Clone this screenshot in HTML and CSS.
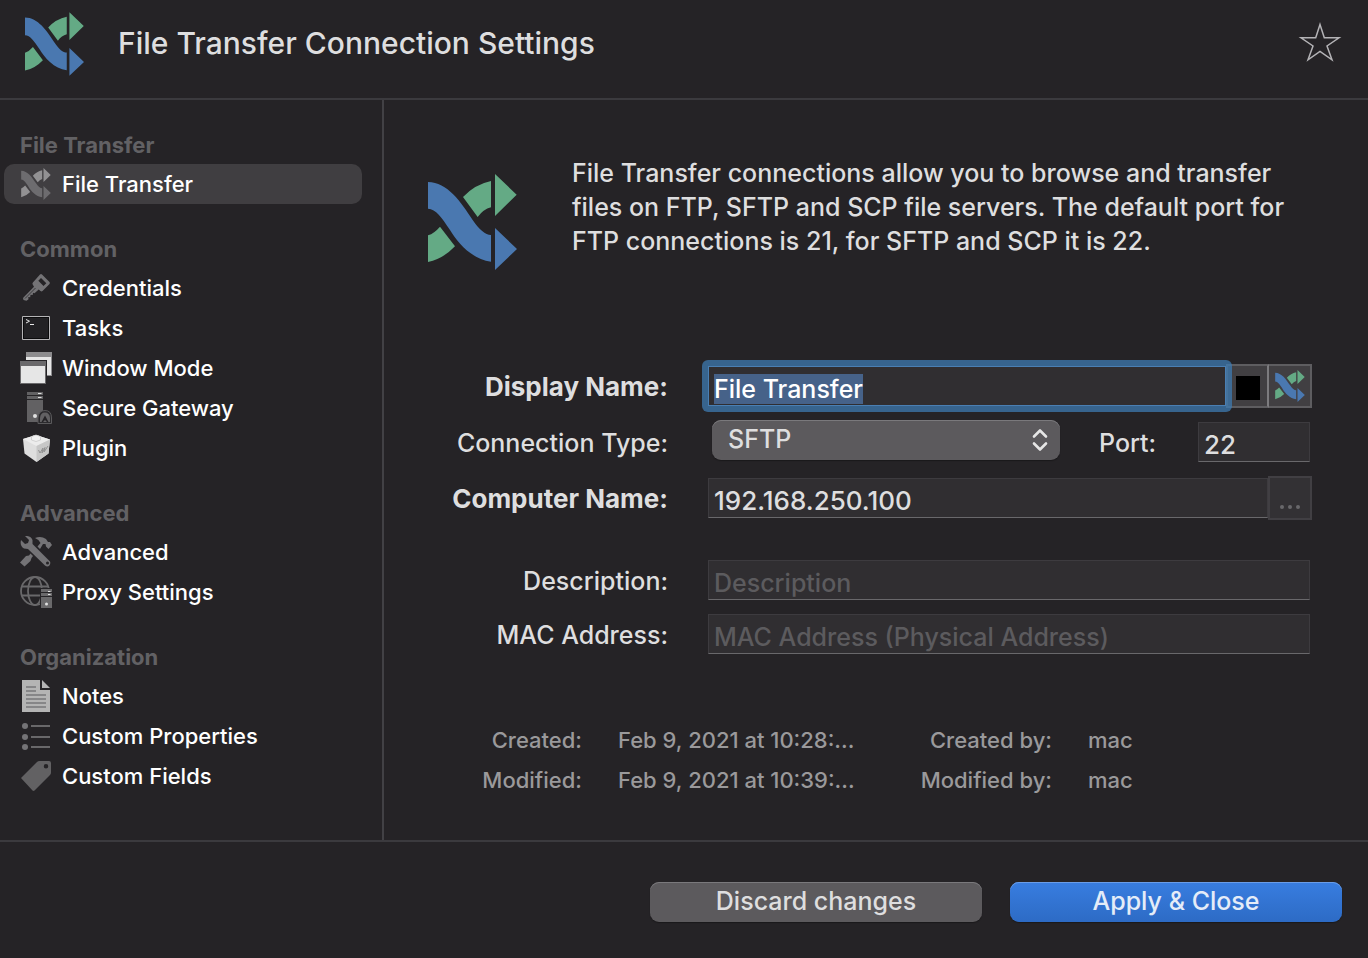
FILE: index.html
```html
<!DOCTYPE html>
<html lang="en">
<head>
<meta charset="utf-8">
<meta name="viewport" content="width=device-width, initial-scale=1">
<title>File Transfer Connection Settings</title>
<link rel="stylesheet" href="styles.css">
</head>
<body>
<svg class="defs" aria-hidden="true">
  <symbol id="logo" viewBox="84 72 267 288">
    <path class="logo-green" d="M189 141Q225 103 273 93V172Q250 178 233 201ZM84 256Q103 250 120 230L165 289Q130 326 84 336ZM285 72L350 134L285 198Z"/>
    <path class="logo-blue" d="M84 96C142 96 183 156 218 210C238 240 256 254 273 255V335C216 328 172 278 150 240C124 201 108 177 84 176ZM285 234L351 297L285 360Z"/>
  </symbol>
</svg>

<header class="header">
  <svg class="header-logo" role="img" aria-label="File Transfer"><use href="#logo"/></svg>
  <h1 class="title">File Transfer Connection Settings</h1>
  <button class="star" type="button" aria-label="Favorite">
    <svg viewBox="0 0 44 44" width="44" height="44"><path d="M22 2.500L26.300 15.800H41L29 24L34 37.800L22 29.500L10 37.800L15 24L3 15.800H17.700Z" fill="none" stroke="#b4b3b6" stroke-width="1.500"/></svg>
  </button>
</header>

<div class="body">
  <nav class="sidebar" aria-label="Settings sections">
    <section class="group">
      <h2 class="group-title">File Transfer</h2>
      <a class="item active" href="#file-transfer" aria-current="page">
        <svg class="icon mono-logo"><use href="#logo"/></svg>File Transfer</a>
    </section>
    <section class="group">
      <h2 class="group-title">Common</h2>
      <a class="item" href="#credentials">
        <svg class="icon" viewBox="0 0 32 32"><path fill="#747376" fill-rule="evenodd" d="M20 2.500Q21 1.700 22 2.500L29.500 10Q30.300 11 29.500 12L22.500 19Q21.500 19.800 20.500 19L18.700 17.500L14.500 21.300L13 20.800L12.700 23L10.500 22.800L10.200 25.200L8.300 25L8.500 27.200L6.500 28.700L3.500 28L3 26L14 14.800L12.700 12.500Q12 11.500 12.900 10.500ZM21 6L18.300 8.800L23.500 14L26.300 11.200Z"/><path d="M5 26.500L15.500 16" stroke="#39383b"/></svg>Credentials</a>
      <a class="item" href="#tasks">
        <svg class="icon" viewBox="0 0 32 32"><path fill="#222124" stroke="#b5b4b6" d="M2.500 4.500H29.500V27.500H2.500Z"/><path fill="none" stroke="#0b0b0c" d="M3.500 5.500H28.500V26.500H3.500Z"/><path fill="none" stroke="#e8e8e8" d="M6 7.500L9.500 9.200L6 11M10 12.500H14"/></svg>Tasks</a>
      <a class="item" href="#window-mode">
        <svg class="icon" viewBox="0 0 32 32"><path fill="#e6e6e6" d="M6 0H32V24H6Z"/><path fill="#8d8c8e" d="M6 0H32V5H6ZM31 5H32V24H26V23H31Z"/><path fill="#252326" d="M0 8H27V32H0Z"/><path fill="#6a696b" d="M0 9H26V32H0Z"/><path fill="#e6e6e6" d="M1 14H25V31H1Z"/></svg>Window Mode</a>
      <a class="item" href="#secure-gateway">
        <svg class="icon" viewBox="0 0 32 32"><path fill="#626163" d="M7 0H23V3H7ZM7 4H23V7H7ZM7 8H23V30H7Z"/><path stroke="#e0e0e0" d="M18 1.500H21.500M18 5.500H21.500"/><circle cx="15" cy="24" r="2" fill="#e0e0e0"/><path fill="#2b2a2d" stroke="#5a595b" d="M18 31.500V26Q18.500 18.500 25 18.500Q31.500 18.500 31.500 26V31.500Z"/><path fill="#626163" d="M20 30V26Q20.500 20.500 25 20.500Q29.500 20.500 30 26V30Z"/><path d="M25 23.500L28.500 30H27L25 28L23 30H21.500Z" fill="#252326"/></svg>Secure Gateway</a>
      <a class="item" href="#plugin">
        <svg class="icon" viewBox="0 0 32 32"><path fill="#dedede" d="M3 7L16 3L30 7.500L28.500 21.500L16.500 30L4.500 21.500Z"/><path fill="#ececec" d="M3 7L16 3L30 7.500L16.500 14Z"/><path fill="#c7c7c7" d="M30 7.500L28.500 21.500L16.500 30V14Z"/><path fill="#f2f2f2" stroke="#c4c4c4" stroke-width=".7" d="M11.500 4.500Q16 1.500 20.500 4.500V8Q16 11 11.500 8Z"/><path stroke="#929292" fill="none" d="M18.500 18L20 21L23 16L22 21L25 15.500L24 20L28 14"/></svg>Plugin</a>
    </section>
    <section class="group">
      <h2 class="group-title">Advanced</h2>
      <a class="item" href="#advanced">
        <svg class="icon" viewBox="0 0 32 32"><path fill="#747376" fill-rule="evenodd" d="M1 4L5 8L8 7L9 4L5 0Q11-.5 12.500 4L12.500 8L30 25.500Q31 28 29 30Q27 31 25 29.500L8 13L4 12.500Q-.5 10 1 4ZM27.500 25.500A1.500 1.500 0 1 0 27.500 28.500A1.500 1.500 0 1 0 27.500 25.500Z"/><path fill="#747376" d="M15 2Q21-.5 26 3L28 6L30 6L32 9L28.500 13L26 10.500L25.500 8L23 8L20 13L17.500 10.500L20.500 7Q19 3.500 15 2ZM10.500 17.500L13 20L11.500 22L10.500 25L4.500 30.500L0 26.500L6 20L9 19.500Z"/></svg>Advanced</a>
      <a class="item" href="#proxy-settings">
        <svg class="icon" viewBox="0 0 32 32"><g fill="none" stroke="#69686a" stroke-width="1.800"><circle cx="15" cy="15" r="14"/><ellipse cx="15" cy="15" rx="7" ry="14"/><path d="M2 10.500H28M2 19.500H28"/></g><path fill="#252326" d="M20 12H32V32H20Z"/><path fill="#6a696b" d="M21 13H32V16H21ZM21 17H32V20H21ZM21 21H32V32H21Z"/><path stroke="#e0e0e0" d="M28 15.500H30.500M28 18.500H30.500"/><circle cx="26.500" cy="28" r="1.500" fill="#e0e0e0"/></svg>Proxy Settings</a>
    </section>
    <section class="group">
      <h2 class="group-title">Organization</h2>
      <a class="item" href="#notes">
        <svg class="icon" viewBox="0 0 32 32"><path fill="#b4b4b4" d="M2 0H20V10H30V32H2ZM22 0L30 8H22Z"/><path stroke="#77777a" stroke-width="1.500" d="M6 7H16M6 11H16M6 15H26M6 19H26M6 23H26M6 27H26"/></svg>Notes</a>
      <a class="item" href="#custom-properties">
        <svg class="icon" viewBox="0 0 32 32"><path stroke="#69686a" stroke-width="2" d="M11 6H30M11 17H30M11 27H30"/><g fill="#747376"><circle cx="5" cy="6" r="3"/><circle cx="5" cy="17" r="3"/><circle cx="5" cy="27" r="3"/></g></svg>Custom Properties</a>
      <a class="item" href="#custom-fields">
        <svg class="icon" viewBox="0 0 32 32"><path fill="#626163" fill-rule="evenodd" d="M1 18L17 2Q18 1 19.500 1H29Q31 1 31 3V12.500Q31 14 30 15L14.500 30.500Q13.500 31.300 12.500 30.500ZM26 4A2 2 0 1 0 26 8.500A2 2 0 1 0 26 4Z"/></svg>Custom Fields</a>
    </section>
  </nav>

  <main class="main">
    <div class="intro">
      <svg class="intro-logo" aria-hidden="true"><use href="#logo"/></svg>
      <p class="intro-text">File Transfer connections allow you to browse and transfer files on FTP, SFTP and SCP file servers. The default port for FTP connections is 21, for SFTP and SCP it is 22.</p>
    </div>

    <form class="form" id="settings">
      <div class="row">
        <label class="label strong" for="display-name">Display Name:</label>
        <div class="control">
          <input class="field focus" id="display-name" type="text" value="File Transfer" autofocus>
          <button class="square color" type="button" aria-label="Color"><span class="swatch"></span></button>
          <button class="square pick" type="button" aria-label="Icon"><svg class="pick-logo"><use href="#logo"/></svg></button>
        </div>
      </div>
      <div class="row">
        <label class="label" for="connection-type">Connection Type:</label>
        <div class="control">
          <div class="select-wrap">
            <select class="select" id="connection-type"><option>SFTP</option><option>FTP</option><option>SCP</option></select>
            <svg class="chevrons" viewBox="0 0 16 24" width="16" height="24"><path d="M2 8.500L8 2.500L14 8.500M2 15.500L8 21.500L14 15.500" fill="none" stroke="#e6e6e6" stroke-width="2.600" stroke-linecap="round" stroke-linejoin="round"/></svg>
          </div>
          <label class="port-label" for="port">Port:</label>
          <input class="field numeric port" id="port" type="text" value="22">
        </div>
      </div>
      <div class="row">
        <label class="label strong" for="computer-name">Computer Name:</label>
        <div class="control">
          <input class="field numeric" id="computer-name" type="text" value="192.168.250.100">
          <button class="square more" type="button" aria-label="Browse"><svg viewBox="0 0 20 4" width="20" height="4" fill="#69686b"><circle cx="2" cy="2" r="2"/><circle cx="10" cy="2" r="2"/><circle cx="18" cy="2" r="2"/></svg></button>
        </div>
      </div>
      <div class="row spaced">
        <label class="label" for="description">Description:</label>
        <div class="control inset"><input class="field" id="description" type="text" placeholder="Description"></div>
      </div>
      <div class="row tight">
        <label class="label" for="mac">MAC Address:</label>
        <div class="control inset"><input class="field" id="mac" type="text" placeholder="MAC Address (Physical Address)"></div>
      </div>
    </form>

    <dl class="meta">
      <dt>Created:</dt><dd>Feb 9, 2021 at 10:28:...</dd>
      <dt>Created by:</dt><dd>mac</dd>
      <dt>Modified:</dt><dd>Feb 9, 2021 at 10:39:...</dd>
      <dt>Modified by:</dt><dd>mac</dd>
    </dl>
  </main>
</div>

<footer class="footer">
  <button class="button" type="button">Discard changes</button>
  <button class="button primary" type="submit" form="settings">Apply &amp; Close</button>
</footer>
<script src="script.js"></script>
</body>
</html>
```
FILE: styles.css
```css
* { box-sizing: border-box; }

body {
  margin: 0;
  min-height: 100vh;
  display: flex;
  flex-direction: column;
  background: #252326;
  color: #dededf;
  font-family: Inter, "Liberation Sans", sans-serif;
  font-size: 25px;
  font-weight: 450;
}

button, input, select { font: inherit; color: inherit; margin: 0; }

.defs { position: absolute; width: 0; height: 0; }
.logo-green { fill: var(--logo-green, #64aa85); }
.logo-blue { fill: var(--logo-blue, #4a78b0); }

.header {
  display: flex;
  align-items: center;
  height: 100px;
  padding: 0 26px 10px 25px;
  border-bottom: 2px solid #3b3a3e;
}
.header-logo { width: 59px; height: 64px; }
.title { margin: 0 auto 0 34px; font-size: 30px; font-weight: 500; line-height: 40px; padding-bottom: 2px; }
.star { display: flex; padding: 0; border: 0; background: none; }

.body { display: flex; flex: 1; }

.sidebar {
  width: 384px;
  flex: none;
  padding: 24px 20px 0 4px;
  border-right: 2px solid #424145;
}
.group { margin-bottom: 24px; }
.group-title {
  margin: 0;
  padding-left: 16px;
  font-size: 22px;
  font-weight: 700;
  line-height: 42px;
  height: 40px;
  color: #626164;
}
.item {
  display: flex;
  align-items: center;
  gap: 10px;
  height: 40px;
  padding-left: 16px;
  border-radius: 10px;
  color: #fff;
  font-size: 22px;
  font-weight: 500;
  text-decoration: none;
}
.item.active { background: #403e41; }
.icon { width: 32px; height: 32px; flex: none; }
.mono-logo { --logo-green: #929193; --logo-blue: #6d6c6f; }

.main { flex: 1; min-width: 0; padding: 56px 56px 40px 44px; }

.intro { display: flex; gap: 55px; margin-bottom: 94px; }
.intro-logo { width: 89px; height: 96px; flex: none; margin-top: 18px; }
.intro-text { margin: 0; line-height: 34px; }

.form { display: flex; flex-direction: column; gap: 12px; }
.row {
  display: grid;
  grid-template-columns: 240px 1fr;
  column-gap: 40px;
  align-items: center;
  min-height: 44px;
}
.row.spaced { margin-top: 26px; }
.row.tight { margin-top: -2px; }
.label { padding-top: 2px; text-align: right; white-space: nowrap; line-height: 34px; }
.label.strong { font-size: 26px; font-weight: 700; }
.control { display: flex; align-items: center; min-width: 0; }
.control.inset { padding-right: 2px; }

.field {
  flex: 1;
  min-width: 0;
  height: 40px;
  padding: 5px 5px 0;
  border: 1px solid #3d3b3f;
  border-bottom-color: #69686b;
  border-radius: 0;
  background: #302e31;
  outline: 0;
}
.field.numeric { font-size: 26px; }
.field::placeholder { color: #5c5b5e; opacity: 1; }
.field::selection { background: #466289; color: #fff; }
.field.focus {
  position: relative;
  z-index: 1;
  border-color: #4a7fb3;
  box-shadow: 0 0 0 6px rgba(62, 123, 178, .75);
  clip-path: inset(-6px round 6px);
}
.field.port { flex: none; width: 112px; margin-right: 2px; }

.square {
  display: flex;
  align-items: center;
  justify-content: center;
  width: 44px;
  height: 44px;
  flex: none;
  padding: 0;
  border: 2px solid #5e5d60;
  background: #413f42;
}
.color { width: 43px; padding-top: 4px; border-right-color: #7c7b7e; }
.pick { width: 43px; border-left: 0; }
.swatch { width: 24px; height: 24px; background: #000; }
.pick-logo { width: 30px; height: 32px; }
.more { align-items: flex-end; padding-bottom: 9px; border-color: #413f43; background: #333134; }

.select-wrap { position: relative; flex: 1; margin-left: 4px; align-self: flex-start; }
.select {
  display: block;
  width: 100%;
  height: 40px;
  padding: 0 40px 2px 16px;
  border: 0;
  border-radius: 9px;
  appearance: none;
  background: #5c5a5d;
  box-shadow: inset 0 1px #7a797c, 0 1px 1px #1a191b;
  outline: 0;
}
.chevrons { position: absolute; right: 12px; top: 8px; pointer-events: none; }
.control:has(.select) { min-height: 44px; }
.port-label { width: 138px; padding: 2px 0 0 39px; line-height: 34px; flex: none; }

.meta {
  display: grid;
  grid-template-columns: 154px 1fr 140px 260px;
  margin: 64px 0 0;
  font-size: 22px;
  line-height: 40px;
  color: #9a999b;
}
.meta dt { text-align: right; white-space: nowrap; }
.meta dd { margin: 0; padding-left: 36px; white-space: nowrap; }

.footer {
  display: flex;
  justify-content: flex-end;
  gap: 28px;
  padding: 40px 26px 36px;
  border-top: 2px solid #3b3a3e;
}
.button {
  width: 332px;
  height: 40px;
  padding: 0 0 2px;
  border: 0;
  border-radius: 9px;
  background: #5c5a5d;
  box-shadow: inset 0 1px #7a797c, 0 1px 1px #1a191b;
}
.button.primary {
  color: #e4ecf8;
  background: linear-gradient(#387de0, #2d6bc5);
  box-shadow: inset 0 1px #6a9de8, 0 1px 1px #1a191b;
}
```
FILE: script.js
```js
const nameField = document.getElementById("display-name");
nameField.focus();
nameField.select();
```
